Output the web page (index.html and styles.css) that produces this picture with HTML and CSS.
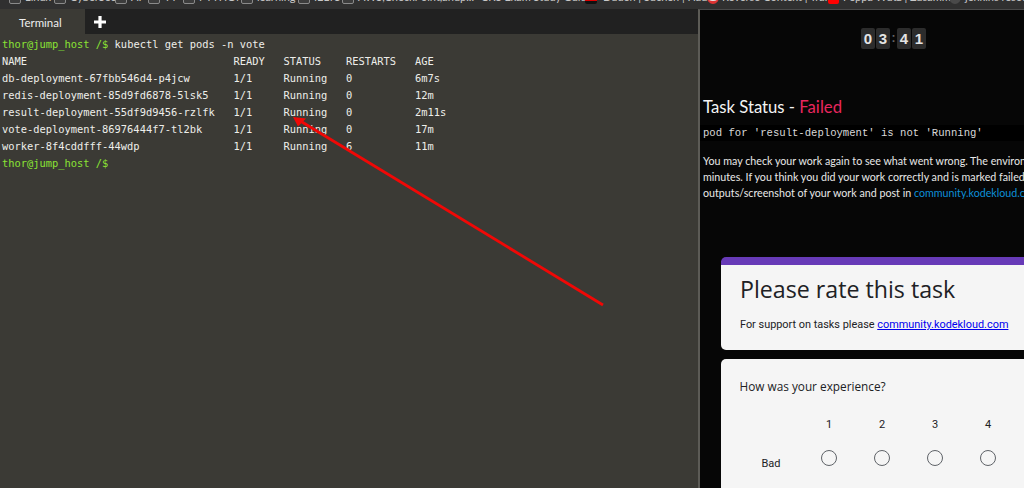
FILE: index.html
```html
<!DOCTYPE html>
<html lang="en">
<head>
<meta charset="utf-8">
<title>Terminal</title>
<link rel="stylesheet" href="styles.css">
</head>
<body>
<div class="bookmarks">
  <span class="bm bm-a"><i class="folder"></i>Linux</span>
  <span class="bm bm-b"><i class="folder"></i>CyberSec</span>
  <span class="bm bm-c"><i class="folder"></i>AI</span>
  <span class="bm bm-d"><i class="folder"></i>YT</span>
  <span class="bm bm-e"><i class="folder"></i>PYTHON</span>
  <span class="bm bm-f"><i class="folder"></i>learning</span>
  <span class="bm bm-g"><i class="folder"></i>IELTS</span>
  <span class="bm bm-h"><i class="folder"></i>AWS,CheckPoint,anup...</span>
  <span class="bm bm-i">CKS Exam Study Guid...</span>
  <span class="bm bm-j"><i class="fav fav-duden"></i>Duden | Suchen | Hau...</span>
  <span class="bm bm-k"><i class="fav fav-rev"></i>Reverso Context | Tran...</span>
  <span class="bm bm-l"><i class="fav fav-yt"></i>Peppa Wutz | Zusamm...</span>
  <span class="bm bm-m"><i class="fav fav-jk"></i>jenkins resources</span>
</div>
<div class="main">
  <section class="terminal">
    <div class="tabs">
      <div class="tab">Terminal</div>
      <svg class="plus" width="14" height="14" viewBox="0 0 14 14"><path d="M7 1V13M1 7H13" stroke="#fff" stroke-width="3.200"/></svg>
    </div>
    <pre class="console"><span class="prompt">thor@jump_host /$</span> kubectl get pods -n vote
NAME                                 READY   STATUS    RESTARTS   AGE
db-deployment-67fbb546d4-p4jcw       1/1     Running   0          6m7s
redis-deployment-85d9fd6878-5lsk5    1/1     Running   0          12m
result-deployment-55df9d9456-rzlfk   1/1     Running   0          2m11s
vote-deployment-86976444f7-tl2bk     1/1     Running   0          17m
worker-8f4cddfff-44wdp               1/1     Running   6          11m
<span class="prompt">thor@jump_host /$</span></pre>
  </section>
  <aside class="panel">
    <div class="timer">
      <span class="digit">0</span><span class="digit">3</span><span class="colon">:</span><span class="digit">4</span><span class="digit">1</span>
    </div>
    <h2 class="status">Task Status - <span class="failed">Failed</span></h2>
    <pre class="error">pod for 'result-deployment' is not 'Running'</pre>
    <p class="note">You may check your work again to see what went wrong. The environment will be available for a few more<br>minutes. If you think you did your work correctly and is marked failed, please take<br>outputs/screenshot of your work and post in <a class="note-link">community.kodekloud.com</a></p>
    <div class="form">
      <div class="card card-head">
        <h1 class="form-title">Please rate this task</h1>
        <p class="form-sub">For support on tasks please <a class="form-link">community.kodekloud.com</a></p>
      </div>
      <div class="card card-q">
        <p class="question">How was your experience?</p>
        <div class="scale">
          <span></span><span class="num">1</span><span class="num">2</span><span class="num">3</span><span class="num">4</span><span class="num">5</span>
          <span class="bad">Bad</span><i class="radio"></i><i class="radio"></i><i class="radio"></i><i class="radio"></i><i class="radio"></i>
        </div>
      </div>
    </div>
  </aside>
</div>
<svg class="arrow" width="340" height="210" viewBox="0 0 340 210">
  <path d="M323 195 L22 12" stroke="#f00806" stroke-width="2.800" fill="none"/>
  <path d="M13 7 L26 8.500 L18 16.500 Z" fill="#f00806"/>
</svg>
</body>
</html>
```
FILE: styles.css
```css
* { box-sizing: border-box; }
html, body { margin: 0; padding: 0; }
body {
  width: 1024px;
  height: 488px;
  overflow: hidden;
  position: relative;
  background: #000;
  font-family: Lato, "Liberation Sans", sans-serif;
}
.bookmarks {
  height: 9px;
  background: #303030;
  position: relative;
  overflow: hidden;
  color: #c8c8c8;
  font-size: 11px;
}
.bm {
  position: absolute;
  top: -10px;
  white-space: nowrap;
  display: flex;
  align-items: center;
  gap: 4px;
  line-height: 14px;
}
.bm-a { left: 9px; }
.bm-b { left: 54px; }
.bm-c { left: 115px; }
.bm-d { left: 148px; }
.bm-e { left: 183px; }
.bm-f { left: 241px; }
.bm-g { left: 298px; }
.bm-h { left: 342px; }
.bm-i { left: 481px; }
.bm-j { left: 585px; gap: 6px; }
.bm-k { left: 707px; gap: 3px; }
.bm-l { left: 828px; gap: 4px; }
.bm-m { left: 949px; }
.folder {
  width: 12px;
  height: 14px;
  border: 1px solid #8a8a8a;
  border-radius: 2px;
  background: #3c3c3c;
}
.fav { width: 12px; height: 14px; border-radius: 2px; }
.fav-duden { background: linear-gradient(#fff 0 9px, #d00 9px 11px, #111 11px); }
.fav-rev { background: #e8e8e8; border-radius: 50%; border-bottom: 3px solid #d33; }
.fav-yt { background: #f00; width: 11px; }
.fav-jk { background: #4a4a4a; border-radius: 50%; }
.main {
  display: flex;
  height: 479px;
}
.terminal {
  width: 698px;
  flex: none;
  display: flex;
  flex-direction: column;
  background: #3b3a35;
}
.tabs {
  height: 25px;
  flex: none;
  display: flex;
  align-items: center;
  background: #212121;
}
.tab {
  width: 85px;
  height: 25px;
  background: #3b3a35;
  color: #eee;
  font-size: 11.500px;
  padding: 6px 0 0 19px;
  line-height: 15px;
}
.plus { margin-left: 8px; }
.console {
  margin: 0;
  padding: 1.500px 0 0 2px;
  font-family: "DejaVu Sans Mono", monospace;
  font-size: 10.400px;
  line-height: 17.100px;
  color: #eeeeea;
}
.prompt { color: #8ae234; }
.panel {
  flex: 1;
  min-width: 0;
  border-left: 2px solid #5c5b56;
  border-top: 1px solid #4a4a4a;
  background: #060606;
  color: #eee;
  overflow: hidden;
  padding-top: 18px;
}
.timer {
  display: flex;
  align-items: center;
  height: 21px;
  padding-left: 161px;
  gap: 1px;
}
.digit {
  width: 14px;
  height: 21px;
  background: #2c2c2c;
  color: #e4e4e4;
  border-radius: 2px;
  font: bold 15px/21px "Liberation Sans", sans-serif;
  text-align: center;
}
.colon { width: 5px; color: #666; font: bold 12px/21px "Liberation Sans", sans-serif; text-align: center; }
.status {
  margin: 46px 0 0 3px;
  font-weight: 400;
  font-size: 16.700px;
  line-height: 24px;
  color: #f4f4f4;
  white-space: nowrap;
}
.failed { color: #e8265e; }
.error {
  margin: 6px 0 0;
  padding: 0 3px;
  height: 16px;
  background: #000;
  color: #d8d8d8;
  font-family: "Liberation Mono", monospace;
  font-size: 10.600px;
  line-height: 16px;
  white-space: pre;
}
.note {
  margin: 12px 0 0 3px;
  font-size: 10.700px;
  line-height: 16px;
  color: #e8e8e8;
  white-space: nowrap;
}
.note-link { color: #0d8fd8; }
.form {
  margin: 56px 0 0 21px;
  width: 340px;
}
.card {
  background: #f5f5f5;
  border-radius: 5px;
}
.card-head {
  height: 93px;
  border-top: 8px solid #673ab7;
  padding: 9px 0 0 19px;
  color: #202124;
}
.form-title {
  margin: 0;
  font-family: "Open Sans", sans-serif;
  font-weight: 400;
  font-size: 23.200px;
  line-height: 30px;
  white-space: nowrap;
}
.form-sub {
  margin: 13px 0 0;
  font-family: Roboto, sans-serif;
  font-size: 10.900px;
  line-height: 16px;
  white-space: nowrap;
}
.form-link { color: #0000ee; text-decoration: underline; }
.card-q {
  margin-top: 9px;
  height: 140px;
  padding: 19px 0 0 18.500px;
  color: #202124;
}
.question {
  margin: 0;
  font-family: "Open Sans", sans-serif;
  font-size: 11.800px;
  line-height: 16px;
}
.scale {
  display: grid;
  grid-template-columns: 63px repeat(5, 53px);
  grid-template-rows: 18px 30px;
  row-gap: 11px;
  margin-top: 21px;
  justify-items: center;
  align-items: center;
  font-family: Roboto, sans-serif;
  font-size: 11px;
}
.bad { transform: translateY(4px); }
.num { display: block; }
.radio {
  width: 16px;
  height: 16px;
  border: 1.500px solid #5f6368;
  border-radius: 50%;
  display: block;
  transform: translateY(-1px);
}
.arrow {
  position: absolute;
  left: 280px;
  top: 110px;
  pointer-events: none;
}
```
